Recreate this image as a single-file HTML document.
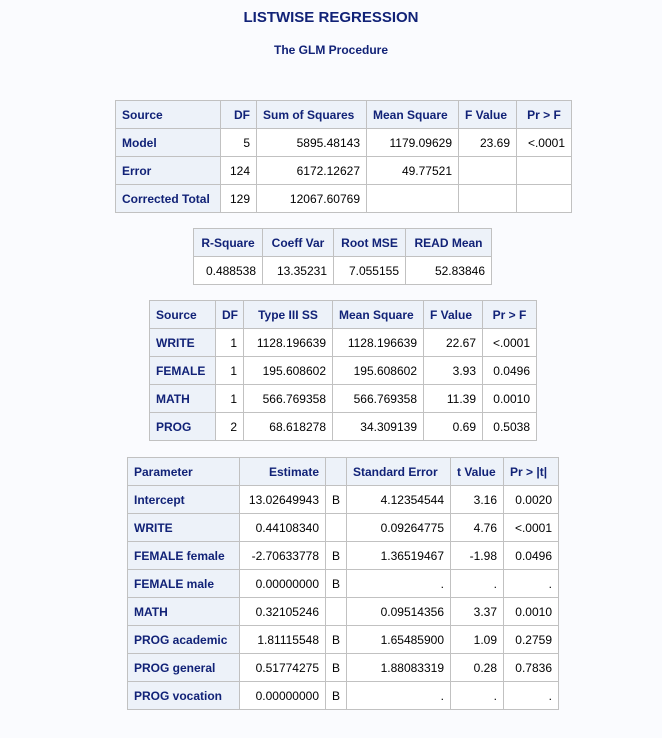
<!DOCTYPE html><html><head><style>
body{margin:0;background:#fafbfe;font-family:"Liberation Sans",Arial,sans-serif;width:662px;height:738px;position:relative;overflow:hidden}
.t{position:absolute;left:0;width:662px;text-align:center;color:#112277;font-weight:bold}
table{position:absolute;border-collapse:collapse;table-layout:fixed;font-size:12px}
td,th{border:1px solid #c1c1c1;height:27px;padding:0 6px;white-space:nowrap;overflow:hidden}
th{background:#edf2f9;color:#112277;font-weight:bold;text-align:left}
th.r{text-align:right}
th.c{text-align:center}
td{background:#fff;color:#000;text-align:right}
td.l{text-align:left}
tr.h th{text-align:center}
</style></head><body>
<div class="t" style="top:9px;font-size:15px">LISTWISE REGRESSION</div>
<div class="t" style="top:43px;font-size:12px">The GLM Procedure</div>

<table style="left:115px;top:100px;width:456px">
<colgroup><col style="width:105px"><col style="width:36px"><col style="width:110px"><col style="width:92px"><col style="width:58px"><col style="width:55px"></colgroup>
<tr><th>Source</th><th class="r">DF</th><th>Sum of Squares</th><th>Mean Square</th><th>F Value</th><th class="c">Pr &gt; F</th></tr>
<tr><th>Model</th><td>5</td><td>5895.48143</td><td>1179.09629</td><td>23.69</td><td>&lt;.0001</td></tr>
<tr><th>Error</th><td>124</td><td>6172.12627</td><td>49.77521</td><td></td><td></td></tr>
<tr><th>Corrected Total</th><td>129</td><td>12067.60769</td><td></td><td></td><td></td></tr>
</table>

<table style="left:193px;top:228px;width:298px">
<colgroup><col style="width:69px"><col style="width:71px"><col style="width:72px"><col style="width:86px"></colgroup>
<tr class="h"><th>R-Square</th><th>Coeff Var</th><th>Root MSE</th><th>READ Mean</th></tr>
<tr><td>0.488538</td><td>13.35231</td><td>7.055155</td><td>52.83846</td></tr>
</table>

<table style="left:149px;top:300px;width:387px">
<colgroup><col style="width:66px"><col style="width:28px"><col style="width:89px"><col style="width:91px"><col style="width:59px"><col style="width:54px"></colgroup>
<tr><th>Source</th><th class="r">DF</th><th class="c">Type III SS</th><th>Mean Square</th><th>F Value</th><th class="c">Pr &gt; F</th></tr>
<tr><th>WRITE</th><td>1</td><td>1128.196639</td><td>1128.196639</td><td>22.67</td><td>&lt;.0001</td></tr>
<tr><th>FEMALE</th><td>1</td><td>195.608602</td><td>195.608602</td><td>3.93</td><td>0.0496</td></tr>
<tr><th>MATH</th><td>1</td><td>566.769358</td><td>566.769358</td><td>11.39</td><td>0.0010</td></tr>
<tr><th>PROG</th><td>2</td><td>68.618278</td><td>34.309139</td><td>0.69</td><td>0.5038</td></tr>
</table>

<table style="left:127px;top:457px;width:431px">
<colgroup><col style="width:112px"><col style="width:86px"><col style="width:21px"><col style="width:104px"><col style="width:53px"><col style="width:55px"></colgroup>
<tr><th>Parameter</th><th class="r">Estimate</th><th></th><th>Standard Error</th><th>t Value</th><th>Pr &gt; |t|</th></tr>
<tr><th>Intercept</th><td>13.02649943</td><td class="l">B</td><td>4.12354544</td><td>3.16</td><td>0.0020</td></tr>
<tr><th>WRITE</th><td>0.44108340</td><td></td><td>0.09264775</td><td>4.76</td><td>&lt;.0001</td></tr>
<tr><th>FEMALE female</th><td>-2.70633778</td><td class="l">B</td><td>1.36519467</td><td>-1.98</td><td>0.0496</td></tr>
<tr><th>FEMALE male</th><td>0.00000000</td><td class="l">B</td><td>.</td><td>.</td><td>.</td></tr>
<tr><th>MATH</th><td>0.32105246</td><td></td><td>0.09514356</td><td>3.37</td><td>0.0010</td></tr>
<tr><th>PROG academic</th><td>1.81115548</td><td class="l">B</td><td>1.65485900</td><td>1.09</td><td>0.2759</td></tr>
<tr><th>PROG general</th><td>0.51774275</td><td class="l">B</td><td>1.88083319</td><td>0.28</td><td>0.7836</td></tr>
<tr><th>PROG vocation</th><td>0.00000000</td><td class="l">B</td><td>.</td><td>.</td><td>.</td></tr>
</table>
</body></html>
